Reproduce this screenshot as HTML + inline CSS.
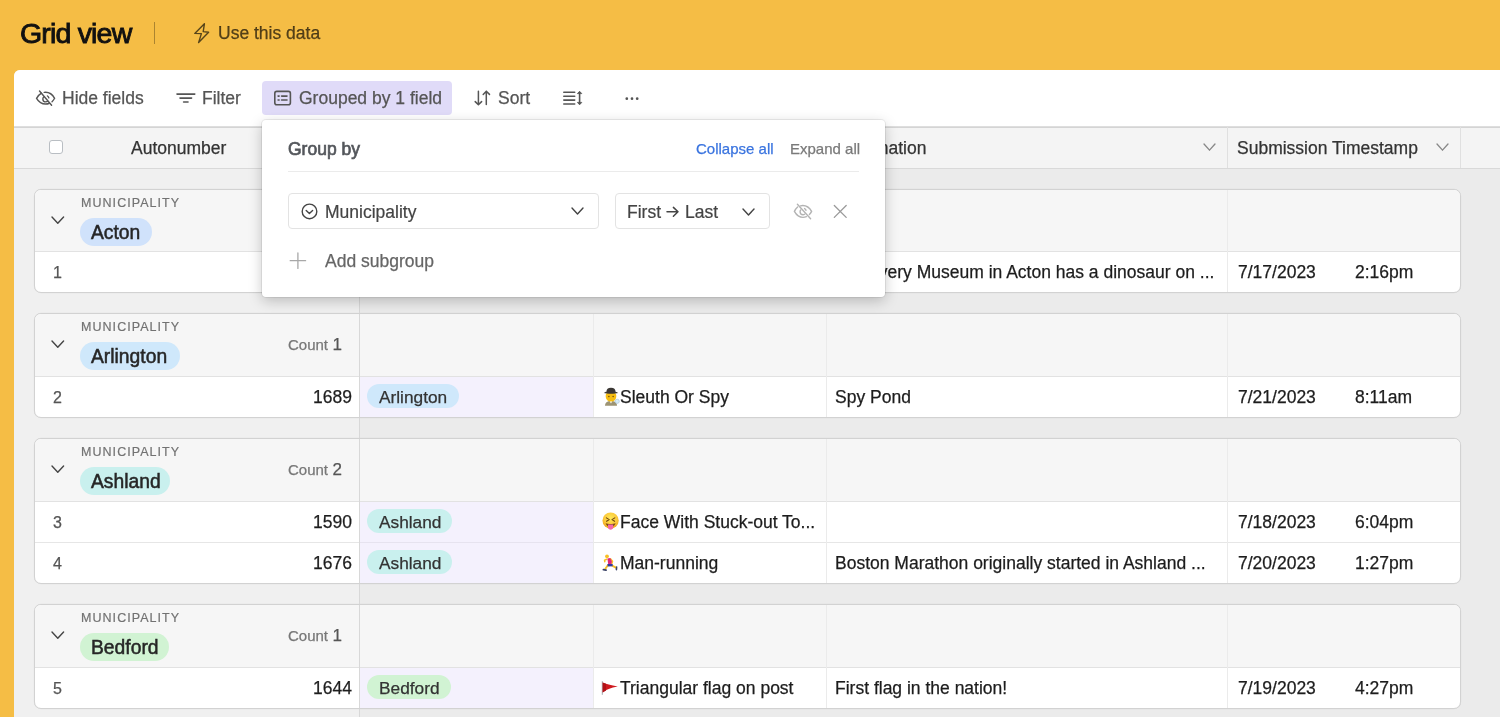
<!DOCTYPE html>
<html><head><meta charset="utf-8"><title>Grid view</title>
<style>
html,body{margin:0;padding:0;}
body{width:1500px;height:717px;overflow:hidden;position:relative;background:#f5bd45;font-family:"Liberation Sans", sans-serif;}
.t{position:absolute;white-space:nowrap;line-height:1;will-change:transform;-webkit-text-stroke:0.25px currentColor;}
.r{position:absolute;}
.i{position:absolute;overflow:visible;}
.cnt span{line-height:1;}
</style></head><body>
<div class="t " style="left:19.60px;top:19.07px;font-size:28.5px;color:#111;letter-spacing:-0.82px;-webkit-text-stroke:0.9px #111;">Grid view</div>
<div class="r" style="left:154px;top:22px;width:1px;height:22px;background:rgba(0,0,0,0.3);"></div>
<svg class="i" style="left:190px;top:20px;" width="22" height="26" viewBox="0 0 22 26" fill="none"><path d="M14.4 3.8 L4.8 13.4 L11.4 13.6 L8.6 22.6 L18.6 12.2 L13.2 11.6 Z" stroke="#56441a" stroke-width="1.4" stroke-linejoin="round"/></svg>
<div class="t " style="left:218.00px;top:24.99px;font-size:17.5px;color:rgba(0,0,0,0.66);">Use this data</div>
<div class="r" style="left:14px;top:70px;width:1486px;height:647px;background:#ebebeb;border-top-left-radius:6px;"></div>
<div class="r" style="left:14px;top:168px;width:345px;height:549px;background:#f0f0f0;"></div>
<div class="r" style="left:14px;top:70px;width:1486px;height:56px;background:#fff;border-top-left-radius:6px;"></div>
<div class="r" style="left:14px;top:126px;width:1486px;height:1px;background:#dedede;"></div>
<div class="r" style="left:14px;top:127px;width:1486px;height:1px;background:#d4d4d4;"></div>
<div class="r" style="left:14px;top:128px;width:1486px;height:40px;background:#f4f4f4;"></div>
<div class="r" style="left:14px;top:168px;width:1486px;height:1px;background:#d9d9d9;"></div>
<div class="r" style="left:1227px;top:127px;width:1px;height:41px;background:#e0e0e0;"></div>
<div class="r" style="left:1460px;top:127px;width:1px;height:41px;background:#e0e0e0;"></div>
<div class="r" style="left:49px;top:140px;width:14px;height:14px;background:#fff;border:1px solid #b9bec3;border-radius:3px;box-sizing:border-box;"></div>
<div class="t " style="left:131.40px;top:140.49px;font-size:17.5px;color:#333;">Autonumber</div>
<div class="t " style="left:835.00px;top:140.49px;font-size:17.5px;color:#333;">Explanation</div>
<div class="t " style="left:1237.40px;top:140.49px;font-size:17.5px;color:#333;">Submission Timestamp</div>
<svg class="i" style="left:1201.7px;top:142.3px;" width="15" height="10.2" viewBox="0 0 15 10.2" fill="none"><path d="M2 2 L7.5 8.2 L13 2" stroke="#888" stroke-width="1.3" stroke-linecap="round" stroke-linejoin="round"/></svg>
<svg class="i" style="left:1435.3px;top:142.3px;" width="15" height="10.2" viewBox="0 0 15 10.2" fill="none"><path d="M2 2 L7.5 8.2 L13 2" stroke="#888" stroke-width="1.3" stroke-linecap="round" stroke-linejoin="round"/></svg>
<svg class="i" style="left:33px;top:88px;" width="24" height="20" viewBox="0 0 24 20" fill="none"><g stroke="#555" stroke-width="1.55" stroke-linecap="round" fill="none" transform="translate(12.6 10.1) scale(0.92) translate(-12 -9.9)"><path d="M7.5 4.6 C 5 6, 3.5 8, 2.2 10.1 C 4.5 14, 8 16.4, 12 16.4 C 13.5 16.4, 14.8 16.1, 16 15.5"/><path d="M10.5 3.7 C 11 3.65, 11.5 3.6, 12 3.6 C 16 3.6, 19.5 6, 21.8 10.1 C 21 11.6, 20 12.8, 19 13.8"/><path d="M10.2 8.4 C 9.3 9.2, 9 10, 9 10.8 C 9 12.6, 10.4 14, 12.2 14 C 13 14, 13.7 13.7, 14.2 13.3"/><path d="M14 7.6 C 14.8 8.1, 15.3 8.8, 15.5 9.6"/><path d="M5.4 2.2 L18.5 17.6"/></g></svg>
<div class="t " style="left:61.60px;top:89.99px;font-size:17.5px;color:#555;">Hide fields</div>
<svg class="i" style="left:174px;top:90px;" width="24" height="16" viewBox="0 0 24 16" fill="none"><g stroke="#555" stroke-width="1.6" stroke-linecap="round"><path d="M3 4.1 H20.8"/><path d="M6 8.1 H17.6"/><path d="M9.6 12 H14"/></g></svg>
<div class="t " style="left:202.40px;top:89.99px;font-size:17.5px;color:#555;">Filter</div>
<div class="r" style="left:262px;top:81px;width:190px;height:34px;background:#e0dbf8;border-radius:4px;"></div>
<svg class="i" style="left:272px;top:89px;" width="21" height="18" viewBox="0 0 21 18" fill="none"><g stroke="#555" stroke-width="1.6" stroke-linecap="round"><rect x="2.8" y="2.4" width="15.6" height="13.4" rx="2"/><path d="M6.1 7.1 H7.1 M9.6 7.1 H15 M6.1 11 H7.1 M9.6 11 H15"/></g></svg>
<div class="t " style="left:299.00px;top:89.99px;font-size:17.5px;color:#555;">Grouped by 1 field</div>
<svg class="i" style="left:472px;top:88px;" width="20" height="20" viewBox="0 0 20 20" fill="none"><g stroke="#555" stroke-width="1.5" stroke-linecap="round" stroke-linejoin="round"><path d="M6.4 3.3 V16.6 M3.2 13.6 L6.4 16.8 L9.6 13.6"/><path d="M14.3 3.3 V16.6 M11.2 6.4 L14.3 3.2 L17.5 6.4"/></g></svg>
<div class="t " style="left:497.90px;top:89.99px;font-size:17.5px;color:#555;">Sort</div>
<svg class="i" style="left:560px;top:88px;" width="26" height="20" viewBox="0 0 26 20" fill="none"><g stroke="#555" stroke-width="1.6" stroke-linecap="round"><path d="M3.8 4.2 H14.7 M3.8 8.2 H14.7 M3.8 12.1 H14.7 M3.8 16 H14.7"/><path d="M19.6 4.5 V15.5"/></g><path d="M17.4 5.6 L19.6 3.3 L21.8 5.6 Z M17.4 14.4 L19.6 16.8 L21.8 14.4 Z" fill="#555" stroke="#555" stroke-width="0.8" stroke-linejoin="round"/></svg>
<svg class="i" style="left:622px;top:95px;" width="20" height="8" viewBox="0 0 20 8" fill="none"><g fill="#555"><circle cx="4.8" cy="3.7" r="1.35"/><circle cx="10" cy="3.7" r="1.35"/><circle cx="15.2" cy="3.7" r="1.35"/></g></svg>
<div class="r" style="left:34px;top:189px;width:1427px;height:104px;background:#fff;border:1px solid #d2d2d2;border-radius:7px;box-sizing:border-box;box-shadow:0 0 0.6px 0.2px rgba(0,0,0,0.07);"></div>
<div class="r" style="left:35px;top:190px;width:1425px;height:61px;background:#f6f6f6;border-top-left-radius:6px;border-top-right-radius:6px;"></div>
<div class="r" style="left:35px;top:251px;width:1425px;height:1px;background:#e2e2e2;"></div>
<div class="r" style="left:360px;top:252px;width:233px;height:40px;background:#f4f1fd;"></div>
<div class="r" style="left:359px;top:190px;width:1px;height:102px;background:#d8d8d8;"></div>
<div class="r" style="left:593px;top:190px;width:1px;height:102px;background:#ebebeb;"></div>
<div class="r" style="left:826px;top:190px;width:1px;height:102px;background:#ebebeb;"></div>
<div class="r" style="left:1227px;top:190px;width:1px;height:102px;background:#ebebeb;"></div>
<svg class="i" style="left:49.8px;top:215px;" width="15.6" height="10.2" viewBox="0 0 15.6 10.2" fill="none"><path d="M2 2 L7.8 8.2 L13.6 2" stroke="#444" stroke-width="1.4" stroke-linecap="round" stroke-linejoin="round"/></svg>
<div class="t " style="left:80.80px;top:196.92px;font-size:12.5px;color:#727272;letter-spacing:1.05px;-webkit-text-stroke:0.2px #727272;">MUNICIPALITY</div>
<div class="r" style="left:80px;top:217.5px;width:72px;height:28.5px;background:#d0e2fb;border-radius:14.25px;"></div>
<div class="t " style="left:91.00px;top:222.86px;font-size:19.3px;color:#262626;-webkit-text-stroke:0.5px #262626;">Acton</div>
<div class="t cnt" style="right:1158.00px;top:211.76px;"><span style="font-size:15px;color:#777;">Count</span> <span style="font-size:17px;color:#555;">1</span></div>
<div class="t " style="left:52.80px;top:264.86px;font-size:16px;color:#555;">1</div>
<div class="r" style="left:367px;top:259px;width:72px;height:23.5px;background:#d0e2fb;border-radius:12px;"></div>
<div class="t " style="left:378.70px;top:263.76px;font-size:17.3px;color:#333;">Acton</div>
<div class="t " style="left:835.00px;top:263.59px;font-size:17.5px;color:#1d1d1d;">Discovery Museum in Acton has a dinosaur on ...</div>
<div class="t " style="left:1238.30px;top:263.59px;font-size:17.5px;color:#1d1d1d;">7/17/2023</div>
<div class="t " style="left:1355.30px;top:263.59px;font-size:17.5px;color:#1d1d1d;">2:16pm</div>
<div class="r" style="left:34px;top:313px;width:1427px;height:105px;background:#fff;border:1px solid #d2d2d2;border-radius:7px;box-sizing:border-box;box-shadow:0 0 0.6px 0.2px rgba(0,0,0,0.07);"></div>
<div class="r" style="left:35px;top:314px;width:1425px;height:62px;background:#f6f6f6;border-top-left-radius:6px;border-top-right-radius:6px;"></div>
<div class="r" style="left:35px;top:376px;width:1425px;height:1px;background:#e2e2e2;"></div>
<div class="r" style="left:360px;top:377px;width:233px;height:40px;background:#f4f1fd;"></div>
<div class="r" style="left:359px;top:314px;width:1px;height:103px;background:#d8d8d8;"></div>
<div class="r" style="left:593px;top:314px;width:1px;height:103px;background:#ebebeb;"></div>
<div class="r" style="left:826px;top:314px;width:1px;height:103px;background:#ebebeb;"></div>
<div class="r" style="left:1227px;top:314px;width:1px;height:103px;background:#ebebeb;"></div>
<svg class="i" style="left:49.8px;top:339px;" width="15.6" height="10.2" viewBox="0 0 15.6 10.2" fill="none"><path d="M2 2 L7.8 8.2 L13.6 2" stroke="#444" stroke-width="1.4" stroke-linecap="round" stroke-linejoin="round"/></svg>
<div class="t " style="left:80.80px;top:320.92px;font-size:12.5px;color:#727272;letter-spacing:1.05px;-webkit-text-stroke:0.2px #727272;">MUNICIPALITY</div>
<div class="r" style="left:80px;top:341.5px;width:100px;height:28.5px;background:#cfe8fb;border-radius:14.25px;"></div>
<div class="t " style="left:91.00px;top:346.86px;font-size:19.3px;color:#262626;-webkit-text-stroke:0.5px #262626;">Arlington</div>
<div class="t cnt" style="right:1158.00px;top:335.76px;"><span style="font-size:15px;color:#777;">Count</span> <span style="font-size:17px;color:#555;">1</span></div>
<div class="t " style="left:52.80px;top:389.86px;font-size:16px;color:#555;">2</div>
<div class="t" style="right:1148.00px;top:388.59px;font-size:17.5px;color:#1d1d1d;">1689</div>
<div class="r" style="left:367px;top:384px;width:92px;height:23.5px;background:#cfe8fb;border-radius:12px;"></div>
<div class="t " style="left:378.70px;top:388.76px;font-size:17.3px;color:#333;">Arlington</div>
<svg class="i" style="left:602px;top:387px;" width="18" height="20" viewBox="0 0 18 20" fill="none"><path d="M3 18.8 C3 15.6 5 13.9 9 13.9 C13 13.9 15 15.6 15 18.8 Z" fill="#9d9474"/><path d="M7.6 14 L9 16.6 L10.4 14 Z" fill="#ffffff"/><path d="M3.7 9 C3.7 5.8 5.8 5.2 9 5.2 C12.2 5.2 14.3 5.8 14.3 9 C14.3 12.6 12 14.6 9 14.6 C6 14.6 3.7 12.6 3.7 9 Z" fill="#f6be12"/><path d="M1.8 5.9 C3 5.2 4 5 4.4 4.8 C4.6 2.2 5.8 0.7 9 0.7 C12.2 0.7 13.4 2.2 13.6 4.8 C14 5 15 5.2 16.2 5.9 C13 7 5 7 1.8 5.9 Z" fill="#3b3734"/><circle cx="6.9" cy="9.4" r="0.75" fill="#6a4a10"/><circle cx="11.1" cy="9.4" r="0.75" fill="#6a4a10"/><circle cx="15.2" cy="14.3" r="2.1" fill="#d6ebf8" stroke="#a9c6da" stroke-width="0.7"/></svg>
<div class="t " style="left:619.50px;top:388.59px;font-size:17.5px;color:#1d1d1d;">Sleuth Or Spy</div>
<div class="t " style="left:835.00px;top:388.59px;font-size:17.5px;color:#1d1d1d;">Spy Pond</div>
<div class="t " style="left:1238.30px;top:388.59px;font-size:17.5px;color:#1d1d1d;">7/21/2023</div>
<div class="t " style="left:1355.30px;top:388.59px;font-size:17.5px;color:#1d1d1d;">8:11am</div>
<div class="r" style="left:34px;top:438px;width:1427px;height:146px;background:#fff;border:1px solid #d2d2d2;border-radius:7px;box-sizing:border-box;box-shadow:0 0 0.6px 0.2px rgba(0,0,0,0.07);"></div>
<div class="r" style="left:35px;top:439px;width:1425px;height:62px;background:#f6f6f6;border-top-left-radius:6px;border-top-right-radius:6px;"></div>
<div class="r" style="left:35px;top:501px;width:1425px;height:1px;background:#e2e2e2;"></div>
<div class="r" style="left:35px;top:542px;width:1425px;height:1px;background:#e6e6e6;"></div>
<div class="r" style="left:360px;top:502px;width:233px;height:81px;background:#f4f1fd;"></div>
<div class="r" style="left:360px;top:542px;width:233px;height:1px;background:#e6e3ef;"></div>
<div class="r" style="left:359px;top:439px;width:1px;height:144px;background:#d8d8d8;"></div>
<div class="r" style="left:593px;top:439px;width:1px;height:144px;background:#ebebeb;"></div>
<div class="r" style="left:826px;top:439px;width:1px;height:144px;background:#ebebeb;"></div>
<div class="r" style="left:1227px;top:439px;width:1px;height:144px;background:#ebebeb;"></div>
<svg class="i" style="left:49.8px;top:464px;" width="15.6" height="10.2" viewBox="0 0 15.6 10.2" fill="none"><path d="M2 2 L7.8 8.2 L13.6 2" stroke="#444" stroke-width="1.4" stroke-linecap="round" stroke-linejoin="round"/></svg>
<div class="t " style="left:80.80px;top:445.92px;font-size:12.5px;color:#727272;letter-spacing:1.05px;-webkit-text-stroke:0.2px #727272;">MUNICIPALITY</div>
<div class="r" style="left:80px;top:466.5px;width:90px;height:28.5px;background:#c9f0ee;border-radius:14.25px;"></div>
<div class="t " style="left:91.00px;top:471.86px;font-size:19.3px;color:#262626;-webkit-text-stroke:0.5px #262626;">Ashland</div>
<div class="t cnt" style="right:1158.00px;top:460.76px;"><span style="font-size:15px;color:#777;">Count</span> <span style="font-size:17px;color:#555;">2</span></div>
<div class="t " style="left:52.80px;top:514.86px;font-size:16px;color:#555;">3</div>
<div class="t" style="right:1148.00px;top:513.59px;font-size:17.5px;color:#1d1d1d;">1590</div>
<div class="r" style="left:367px;top:509px;width:85px;height:23.5px;background:#c9f0ee;border-radius:12px;"></div>
<div class="t " style="left:378.70px;top:513.76px;font-size:17.3px;color:#333;">Ashland</div>
<svg class="i" style="left:602px;top:512px;" width="18" height="20" viewBox="0 0 18 20" fill="none"><defs><radialGradient id="fg" cx="0.5" cy="0.35" r="0.65"><stop offset="0" stop-color="#ffe95a"/><stop offset="0.6" stop-color="#fbc93a"/><stop offset="1" stop-color="#f0a21e"/></radialGradient></defs><circle cx="8.6" cy="8.6" r="8.1" fill="url(#fg)"/><path d="M4.4 5.9 L7.2 7.6 L4.6 9.3 M12.8 5.9 L10 7.6 L12.6 9.3" stroke="#6b4210" stroke-width="1.1" fill="none" stroke-linecap="round" stroke-linejoin="round"/><path d="M3.6 11.2 C6 12.2 11.2 12.2 13.6 11.2 C12.6 14 10.6 15 8.6 15 C6.6 15 4.6 14 3.6 11.2 Z" fill="#7a4a12"/><path d="M6 12.6 H11.2 V15.6 C11.2 18.4 6 18.4 6 15.6 Z" fill="#f468a8"/></svg>
<div class="t " style="left:619.50px;top:513.59px;font-size:17.5px;color:#1d1d1d;">Face With Stuck-out To...</div>
<div class="t " style="left:1238.30px;top:513.59px;font-size:17.5px;color:#1d1d1d;">7/18/2023</div>
<div class="t " style="left:1355.30px;top:513.59px;font-size:17.5px;color:#1d1d1d;">6:04pm</div>
<div class="t " style="left:52.80px;top:555.86px;font-size:16px;color:#555;">4</div>
<div class="t" style="right:1148.00px;top:554.59px;font-size:17.5px;color:#1d1d1d;">1676</div>
<div class="r" style="left:367px;top:550px;width:85px;height:23.5px;background:#c9f0ee;border-radius:12px;"></div>
<div class="t " style="left:378.70px;top:554.76px;font-size:17.3px;color:#333;">Ashland</div>
<svg class="i" style="left:602px;top:553px;" width="18" height="18" viewBox="0 0 18 18" fill="none"><circle cx="5" cy="3.3" r="1.9" fill="#f8c024"/><path d="M4.6 6.3 L2.6 7.2 L2.8 8.6" stroke="#f8c024" stroke-width="1.6" fill="none" stroke-linecap="round" stroke-linejoin="round"/><path d="M8.6 6 L10.4 8.2 L9.8 10.2" stroke="#f8c024" stroke-width="1.7" fill="none" stroke-linecap="round" stroke-linejoin="round"/><path d="M5.4 5.4 L8.2 5 L9.8 8.2 L9.4 11.2 L6.2 11.2 Z" fill="#e0287a"/><path d="M5.8 12.3 L3.2 16" stroke="#f8c024" stroke-width="1.9" stroke-linecap="round"/><path d="M9.8 12.4 L13.8 14.6" stroke="#f8c024" stroke-width="1.9" stroke-linecap="round"/><path d="M5.4 11 L10.6 11 L10.8 13.2 L5.6 13.4 Z" fill="#2d3aa0"/><path d="M1.4 16.6 L4 17.2" stroke="#3a4266" stroke-width="1.8" stroke-linecap="round"/><path d="M14.6 14 L14.4 16.6" stroke="#3a4266" stroke-width="1.6" stroke-linecap="round"/></svg>
<div class="t " style="left:619.50px;top:554.59px;font-size:17.5px;color:#1d1d1d;">Man-running</div>
<div class="t " style="left:835.00px;top:554.59px;font-size:17.5px;color:#1d1d1d;">Boston Marathon originally started in Ashland ...</div>
<div class="t " style="left:1238.30px;top:554.59px;font-size:17.5px;color:#1d1d1d;">7/20/2023</div>
<div class="t " style="left:1355.30px;top:554.59px;font-size:17.5px;color:#1d1d1d;">1:27pm</div>
<div class="r" style="left:34px;top:604px;width:1427px;height:105px;background:#fff;border:1px solid #d2d2d2;border-radius:7px;box-sizing:border-box;box-shadow:0 0 0.6px 0.2px rgba(0,0,0,0.07);"></div>
<div class="r" style="left:35px;top:605px;width:1425px;height:62px;background:#f6f6f6;border-top-left-radius:6px;border-top-right-radius:6px;"></div>
<div class="r" style="left:35px;top:667px;width:1425px;height:1px;background:#e2e2e2;"></div>
<div class="r" style="left:360px;top:668px;width:233px;height:40px;background:#f4f1fd;"></div>
<div class="r" style="left:359px;top:605px;width:1px;height:103px;background:#d8d8d8;"></div>
<div class="r" style="left:593px;top:605px;width:1px;height:103px;background:#ebebeb;"></div>
<div class="r" style="left:826px;top:605px;width:1px;height:103px;background:#ebebeb;"></div>
<div class="r" style="left:1227px;top:605px;width:1px;height:103px;background:#ebebeb;"></div>
<svg class="i" style="left:49.8px;top:630px;" width="15.6" height="10.2" viewBox="0 0 15.6 10.2" fill="none"><path d="M2 2 L7.8 8.2 L13.6 2" stroke="#444" stroke-width="1.4" stroke-linecap="round" stroke-linejoin="round"/></svg>
<div class="t " style="left:80.80px;top:611.92px;font-size:12.5px;color:#727272;letter-spacing:1.05px;-webkit-text-stroke:0.2px #727272;">MUNICIPALITY</div>
<div class="r" style="left:80px;top:632.5px;width:89px;height:28.5px;background:#d1f3d3;border-radius:14.25px;"></div>
<div class="t " style="left:91.00px;top:637.86px;font-size:19.3px;color:#262626;-webkit-text-stroke:0.5px #262626;">Bedford</div>
<div class="t cnt" style="right:1158.00px;top:626.76px;"><span style="font-size:15px;color:#777;">Count</span> <span style="font-size:17px;color:#555;">1</span></div>
<div class="t " style="left:52.80px;top:680.86px;font-size:16px;color:#555;">5</div>
<div class="t" style="right:1148.00px;top:679.59px;font-size:17.5px;color:#1d1d1d;">1644</div>
<div class="r" style="left:367px;top:675px;width:84px;height:23.5px;background:#d1f3d3;border-radius:12px;"></div>
<div class="t " style="left:378.70px;top:679.76px;font-size:17.3px;color:#333;">Bedford</div>
<svg class="i" style="left:600px;top:679px;" width="20" height="18" viewBox="0 0 20 18" fill="none"><path d="M2.3 2.2 V15.8" stroke="#a0a8ae" stroke-width="1"/><path d="M2.7 3.4 C 5.5 4.6, 11 6.4, 17.8 7.4 C 11 8.6, 5.5 10.6, 2.7 13.6 Z" fill="#cf1a1f"/><path d="M2.7 3.4 C 4 4, 5 4.4, 6 4.8 L6 11.4 C 5 12, 3.8 12.8, 2.7 13.6 Z" fill="#b01217"/></svg>
<div class="t " style="left:619.50px;top:679.59px;font-size:17.5px;color:#1d1d1d;">Triangular flag on post</div>
<div class="t " style="left:835.00px;top:679.59px;font-size:17.5px;color:#1d1d1d;">First flag in the nation!</div>
<div class="t " style="left:1238.30px;top:679.59px;font-size:17.5px;color:#1d1d1d;">7/19/2023</div>
<div class="t " style="left:1355.30px;top:679.59px;font-size:17.5px;color:#1d1d1d;">4:27pm</div>
<div class="r" style="left:359px;top:169px;width:1px;height:20px;background:#d8d8d8;"></div>
<div class="r" style="left:359px;top:293px;width:1px;height:20px;background:#d8d8d8;"></div>
<div class="r" style="left:359px;top:418px;width:1px;height:20px;background:#d8d8d8;"></div>
<div class="r" style="left:359px;top:584px;width:1px;height:20px;background:#d8d8d8;"></div>
<div class="r" style="left:359px;top:709px;width:1px;height:8px;background:#d8d8d8;"></div>
<div class="r" style="left:262px;top:120px;width:623px;height:177px;background:#fff;border-radius:4px;box-shadow:0 0 0 1px rgba(0,0,0,0.07),0 4px 14px rgba(0,0,0,0.22);"></div>
<div class="t " style="left:288.20px;top:141.09px;font-size:17.5px;color:#53565b;-webkit-text-stroke:0.65px #53565b;">Group by</div>
<div class="t " style="left:695.70px;top:140.90px;font-size:15px;color:#3a74df;">Collapse all</div>
<div class="t " style="left:789.50px;top:140.90px;font-size:15px;color:#7a7a7a;">Expand all</div>
<div class="r" style="left:288px;top:171px;width:571px;height:1px;background:#ebebeb;"></div>
<div class="r" style="left:288px;top:193px;width:311px;height:36px;border:1px solid #e3e3e3;border-radius:4px;box-sizing:border-box;background:#fff;"></div>
<svg class="i" style="left:299px;top:201px;" width="21" height="21" viewBox="0 0 21 21" fill="none"><circle cx="10.5" cy="10.4" r="7.3" stroke="#444" stroke-width="1.4"/><path d="M7.2 9.4 L10.4 12.4 L13.6 9.4" stroke="#444" stroke-width="1.4" stroke-linecap="round" stroke-linejoin="round"/></svg>
<div class="t " style="left:325.30px;top:204.09px;font-size:17.5px;color:#444;-webkit-text-stroke:0.2px #444;">Municipality</div>
<svg class="i" style="left:569.7px;top:206.2px;" width="15" height="10" viewBox="0 0 15 10" fill="none"><path d="M2 2 L7.5 8 L13 2" stroke="#444" stroke-width="1.4" stroke-linecap="round" stroke-linejoin="round"/></svg>
<div class="r" style="left:615px;top:193px;width:155px;height:36px;border:1px solid #e3e3e3;border-radius:4px;box-sizing:border-box;background:#fff;"></div>
<div class="t " style="left:626.50px;top:204.19px;font-size:17.5px;color:#444;-webkit-text-stroke:0.2px #444;">First</div>
<svg class="i" style="left:664px;top:204px;" width="17" height="16" viewBox="0 0 17 16" fill="none"><path d="M3 7.8 H14 M9.4 3.4 L14 7.8 L9.4 12.2" stroke="#444" stroke-width="1.5" stroke-linecap="round" stroke-linejoin="round"/></svg>
<div class="t " style="left:685.00px;top:204.19px;font-size:17.5px;color:#444;-webkit-text-stroke:0.2px #444;">Last</div>
<svg class="i" style="left:741.2px;top:206.8px;" width="15" height="10" viewBox="0 0 15 10" fill="none"><path d="M2 2 L7.5 8 L13 2" stroke="#444" stroke-width="1.4" stroke-linecap="round" stroke-linejoin="round"/></svg>
<svg class="i" style="left:792px;top:202px;" width="24" height="20" viewBox="0 0 24 20" fill="none"><g stroke="#b3b3b3" stroke-width="1.4" stroke-linecap="round" fill="none"><path d="M5.6 5 C 4.5 6, 3.3 7.6, 2.4 9.4 C 4.4 13, 7.4 15.4, 11 15.4 C 12.4 15.4, 13.4 15.1, 14.4 14.7"/><path d="M8.6 3.8 C 9.3 3.6, 10 3.5, 10.8 3.5 C 14.4 3.5, 17.6 5.8, 19.6 9.4 C 19 10.6, 18.2 11.6, 17.4 12.4"/><path d="M8.7 8 C 8.3 8.5, 8.1 9.1, 8.1 9.8 C 8.1 11.4, 9.4 12.7, 11 12.7 C 11.6 12.7, 12.2 12.5, 12.6 12.2"/><path d="M12.6 6.6 C 13.3 7, 13.8 7.6, 14 8.3"/><path d="M5.4 2.2 L18.6 16.7"/></g></svg>
<svg class="i" style="left:832px;top:203px;" width="17" height="17" viewBox="0 0 17 17" fill="none"><path d="M2.3 2.5 L14.2 14.4 M14.2 2.5 L2.3 14.4" stroke="#9a9a9a" stroke-width="1.3" stroke-linecap="round"/></svg>
<svg class="i" style="left:288px;top:251px;" width="20" height="20" viewBox="0 0 20 20" fill="none"><path d="M9.9 2 V17.4 M2.2 9.7 H17.6" stroke="#a8a8a8" stroke-width="1.3" stroke-linecap="round"/></svg>
<div class="t " style="left:324.70px;top:252.79px;font-size:17.5px;color:#666;">Add subgroup</div>
</body></html>
